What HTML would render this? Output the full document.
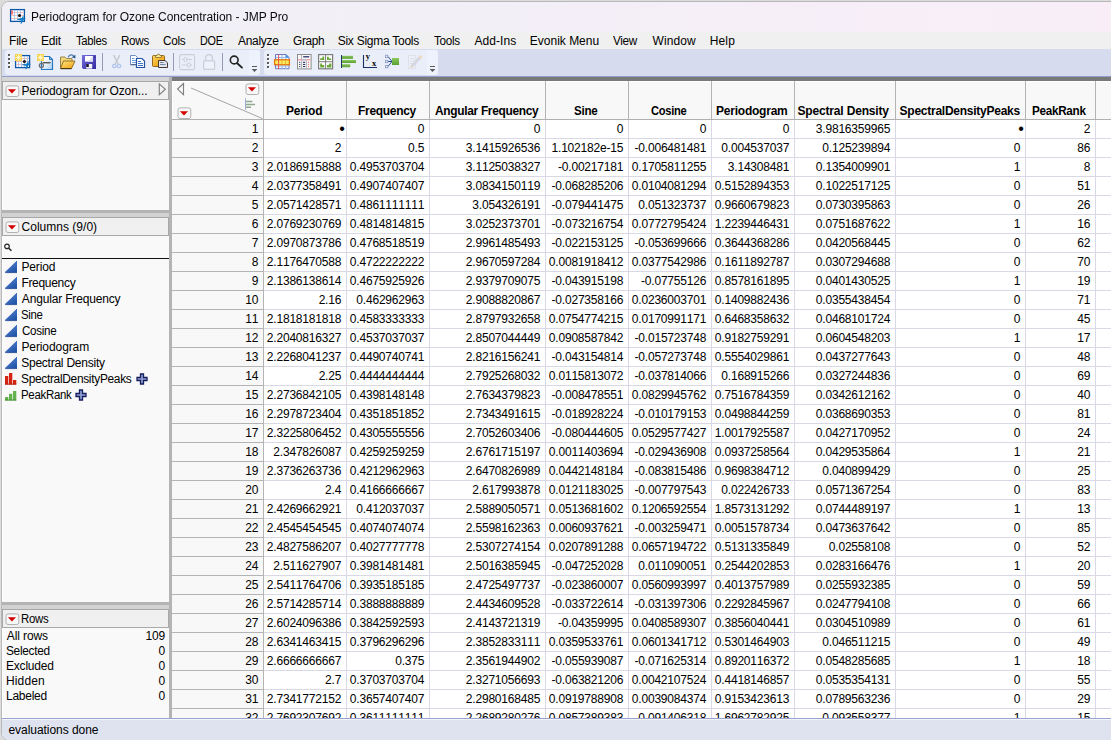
<!DOCTYPE html>
<html><head><meta charset="utf-8"><title>Periodogram for Ozone Concentration - JMP Pro</title>
<style>
*{box-sizing:border-box;margin:0;padding:0}
html,body{width:1111px;height:740px;overflow:hidden;background:#dcdcdc}
body{font-family:"Liberation Sans",sans-serif;font-size:11.5px;color:#000;position:relative}
.a{position:absolute}
.t{position:absolute;white-space:pre;line-height:14px;height:14px;font-size:12px;transform-origin:0 0}
#win{left:1px;top:1px;width:1120px;height:740px;border:1px solid #b8b8b8;border-radius:8px 0 0 8px;background:#f0f0f0;overflow:hidden}
#title{left:2px;top:2px;width:1109px;height:30px;background:linear-gradient(90deg,#f1f0f7 0%,#f3eff7 45%,#f9eef8 100%);border-radius:7px 0 0 0}
#menu{left:2px;top:32px;width:1109px;height:17px;background:#f0f0f0}
#tb{left:2px;top:49px;width:1109px;height:27px;background:#d6dbee}
#tbline{left:2px;top:76px;width:1109px;height:1px;background:#919dca}
.grp{position:absolute;top:50px;height:25px;background:#eaeef9;border-radius:3px}
.ovf{position:absolute;top:0;right:0;width:11px;height:25px;background:#edf2fc;border-radius:0 3px 3px 0}
.sep{position:absolute;top:53px;width:1px;height:19px;background:#9aa0b4}
#left{left:2px;top:77px;width:167px;height:641px;background:#f9f9f9;border-left:1px solid #fff}
.hs{position:absolute;left:2px;width:167px}
.ph{position:absolute;left:2px;width:167px;height:19px;background:#f0f0f0;border:1px solid #a8a8a8}
.rb{position:absolute;width:15px;height:13px}
#vs{left:169px;top:77px;width:3px;height:641px;background:#b4b4b4}
#tbl{left:172px;top:77px;width:939px;height:641px;background:#fff;overflow:hidden}
#band{left:0;top:0;width:939px;height:4px;background:#797979}
#hd{left:0;top:4px;width:939px;height:38px;background:#f8f8f8;border-top:1px solid #fff;border-left:1px solid #fff}
#hdl{left:0;top:42px;width:939px;height:1px;background:#b0b0b0}
#rn{left:0;top:43px;width:91px;height:600px;background:#f8f8f8}
.vl{position:absolute;top:4px;width:1px;height:39px;background:#b4b4b4}
.vd{position:absolute;top:43px;width:1px;height:600px;background:#d8d8e6}
.r{position:absolute;left:0;width:939px;height:19px;border-bottom:1px solid #d8d8e6}
.r i{position:absolute;left:0;bottom:-1px;width:91px;height:1px;background:#b4b4b4}
.c{position:absolute;top:0;height:18px;line-height:18px;text-align:right;white-space:pre;font-size:12px;letter-spacing:-0.2px;font-kerning:none;font-variant-numeric:tabular-nums}
.c u{text-decoration:none;display:inline-block;font-size:16px;line-height:18px;height:18px;vertical-align:top;position:relative;top:0px;letter-spacing:0}
#st{left:2px;top:718px;width:1109px;height:22px;background:#dfe3f0;border-top:1px solid #99a3d0;border-radius:0 0 0 7px;box-shadow:inset 0 1px 0 #f3f5fb}
</style></head><body>

<div class="a" id="win"></div>
<div class="a" id="title"></div>
<svg class="a" style="left:9px;top:8px" width="18" height="18" viewBox="0 0 18 18">
<rect x="1.6" y="1.6" width="13.8" height="11.8" fill="#fff" stroke="#0a56a8" stroke-width="1.3"/>
<path d="M2.3 4.5H14.7M2.3 7.5H14.7M2.3 10.5H14.7" stroke="#f6b4b4" stroke-width="0.9" fill="none"/>
<path d="M5.5 2.3V12.7M8.5 2.3V12.7M11.5 2.3V12.7" stroke="#a8c4e8" stroke-width="0.9" fill="none"/>
<path d="M3 2.6V6.4" stroke="#ff4040" stroke-width="1.3"/>
<circle cx="10.5" cy="7.5" r="1.5" fill="#111"/>
<path d="M14.3 7.2 L14.7 10.2 L17 10.8 L14.4 12 L12.2 16 L11.5 15.7 L12.4 12.4 L8.2 11.8 L8.4 11 L12.8 10 Z" fill="#0f7ec6"/>
</svg>
<div class="t" style="left:30.8px;top:10px;letter-spacing:-0.045px;margin-left:0.6px;color:#0c0c0c;will-change:transform">Periodogram for Ozone Concentration - JMP Pro</div>
<div class="a" id="menu"></div>
<div class="t" style="left:9.1px;top:34px;letter-spacing:-0.267px">File</div>
<div class="t" style="left:40.9px;top:34px;letter-spacing:-0.135px">Edit</div>
<div class="t" style="left:75.97px;top:34px;letter-spacing:-0.3px;transform:scaleX(0.9418)">Tables</div>
<div class="t" style="left:121.03px;top:34px;letter-spacing:-0.3px;transform:scaleX(0.9702)">Rows</div>
<div class="t" style="left:163.44px;top:34px;letter-spacing:-0.3px;transform:scaleX(0.9836)">Cols</div>
<div class="t" style="left:200.2px;top:34px;letter-spacing:-0.3px;transform:scaleX(0.8991)">DOE</div>
<div class="t" style="left:237.67px;top:34px;letter-spacing:-0.3px;transform:scaleX(0.998)">Analyze</div>
<div class="t" style="left:292.54px;top:34px;letter-spacing:-0.3px;transform:scaleX(0.9844)">Graph</div>
<div class="t" style="left:337.7px;top:34px;letter-spacing:-0.26px">Six Sigma Tools</div>
<div class="t" style="left:433.76px;top:34px;letter-spacing:-0.3px;transform:scaleX(0.9739)">Tools</div>
<div class="t" style="left:474.47px;top:34px;letter-spacing:0.067px">Add-Ins</div>
<div class="t" style="left:529.8px;top:34px;letter-spacing:-0.003px">Evonik Menu</div>
<div class="t" style="left:613.46px;top:34px;letter-spacing:-0.3px;transform:scaleX(0.9763)">View</div>
<div class="t" style="left:652.62px;top:34px;letter-spacing:0.08px">Window</div>
<div class="t" style="left:709.8px;top:34px;letter-spacing:0.117px">Help</div>
<div class="a" id="tb"></div><div class="a" id="tbline"></div>
<div class="grp" style="left:5px;width:255px"><div class="ovf"></div></div>
<div class="grp" style="left:264px;width:174px"><div class="ovf"></div></div>
<svg class="a" style="left:0;top:49px" width="450" height="27" viewBox="0 49 450 27">
<defs>
<linearGradient id="gfold" x1="0" y1="0" x2="1" y2="1"><stop offset="0" stop-color="#ffe680"/><stop offset="1" stop-color="#f0a010"/></linearGradient>
<linearGradient id="gflop" x1="0" y1="0" x2="1" y2="1"><stop offset="0" stop-color="#7470e0"/><stop offset="1" stop-color="#3428a0"/></linearGradient>
<linearGradient id="gdoc" x1="0" y1="0" x2="1" y2="1"><stop offset="0.3" stop-color="#ffffff"/><stop offset="1" stop-color="#a8cdf0"/></linearGradient>
<linearGradient id="gclip" x1="0" y1="0" x2="1" y2="1"><stop offset="0" stop-color="#ffd860"/><stop offset="1" stop-color="#e89000"/></linearGradient>
<linearGradient id="ggrn" x1="0" y1="0" x2="0" y2="1"><stop offset="0" stop-color="#8cc860"/><stop offset="1" stop-color="#58a030"/></linearGradient>
</defs>
<!-- grippers -->
<g fill="#fff"><rect x="9" y="55" width="2" height="2"/><rect x="9" y="59" width="2" height="2"/><rect x="9" y="63" width="2" height="2"/><rect x="9" y="67" width="2" height="2"/><rect x="268" y="55" width="2" height="2"/><rect x="268" y="59" width="2" height="2"/><rect x="268" y="63" width="2" height="2"/><rect x="268" y="67" width="2" height="2"/></g>
<g fill="#585858"><rect x="8" y="54" width="2" height="2"/><rect x="8" y="58" width="2" height="2"/><rect x="8" y="62" width="2" height="2"/><rect x="8" y="66" width="2" height="2"/><rect x="267" y="54" width="2" height="2"/><rect x="267" y="58" width="2" height="2"/><rect x="267" y="62" width="2" height="2"/><rect x="267" y="66" width="2" height="2"/></g>
<!-- icon1 new table -->
<rect x="15.6" y="55.6" width="14" height="12" fill="#fff" stroke="#0a56a8" stroke-width="1.3"/>
<path d="M16 58.5H29M16 61.5H29M16 64.5H29" stroke="#f4b0b0" stroke-width="0.9"/>
<path d="M18.5 56V67M21.5 56V67M24.5 56V67M27.5 56V67" stroke="#a8c4e8" stroke-width="0.9"/>
<circle cx="24.4" cy="61.4" r="1.5" fill="#111"/>
<path d="M28.3 60.6 L28.7 63.5 L31.2 64.1 L28.5 65.3 L26.1 69.4 L25.4 69.1 L26.3 65.7 L22 65.2 L22.2 64.4 L26.8 63.4 Z" fill="#0f7ec6"/>
<rect x="15" y="54" width="7" height="7" fill="#f6d24e"/>
<path d="M18.5 54.5V60.5M15.5 57.5H21.5M16.3 55.3L20.7 59.7M20.7 55.3L16.3 59.7" stroke="#fff6c8" stroke-width="0.9"/>
<!-- icon2 new script -->
<path d="M41.5 56.5H49.5L52.5 59.5V69.5H41.5Z" fill="url(#gdoc)" stroke="#2a78c0" stroke-width="1.2"/>
<path d="M49.5 56.5V59.5H52.5" fill="none" stroke="#2a78c0" stroke-width="1"/>
<path d="M42.6 62.7H50.6" stroke="#5a5a5a" stroke-width="1.5"/>
<circle cx="41.4" cy="65.4" r="2" fill="none" stroke="#707070" stroke-width="1.3"/>
<rect x="37" y="54" width="7" height="7" fill="#f6d24e"/>
<path d="M40.5 54.5V60.5M37.5 57.5H43.5M38.3 55.3L42.7 59.7M42.7 55.3L38.3 59.7" stroke="#fff6c8" stroke-width="0.9"/>
<!-- icon3 open folder -->
<path d="M60.5 68.5V57H65L66.5 58.5H72V61" fill="#f2d878" stroke="#9a8450" stroke-width="1"/>
<path d="M60.5 68.5L63.5 61H75L71.5 68.5Z" fill="url(#gfold)" stroke="#8a6a20" stroke-width="0.9"/>
<path d="M60.5 68.7H71.5" stroke="#3a2a08" stroke-width="1"/>
<path d="M68.2 57.2C69.4 54.4 72.6 54.2 73.8 56.6" fill="none" stroke="#4a78a8" stroke-width="1.2"/>
<path d="M71.8 57.2L75.4 58.4L75.4 54.8Z" fill="#2a5a90"/>
<!-- icon4 floppy -->
<path d="M82 55H96V69H83.2L82 67.8Z" fill="url(#gflop)"/>
<rect x="85" y="56" width="8" height="5.6" fill="#fff"/>
<path d="M93 56L93 61.6L88 61.6Z" fill="#d8e0f0"/>
<rect x="86.2" y="64" width="6" height="4.6" fill="#f4f4f8"/>
<rect x="86.2" y="64" width="2.6" height="3" fill="#18182a"/>
<rect x="94" y="56.5" width="1.2" height="1.2" fill="#2a2070"/>
<!-- sep -->
<g fill="#9698b8"><rect x="102" y="53" width="1" height="18"/><rect x="173" y="53" width="1" height="18"/><rect x="222" y="53" width="1" height="18"/></g>
<!-- scissors disabled -->
<path d="M113.6 55L118.2 64M119.8 55L115.2 64" stroke="#c8cad2" stroke-width="1.6" fill="none"/>
<circle cx="114.3" cy="66" r="1.7" fill="#eef2fc" stroke="#b0c4ee" stroke-width="1.3"/>
<circle cx="119" cy="66" r="1.7" fill="#eef2fc" stroke="#b0c4ee" stroke-width="1.3"/>
<!-- copy -->
<path d="M130.5 55.5H135.5L137.5 57.5V64.5H130.5Z" fill="#fff" stroke="#6f8fc0" stroke-width="1"/>
<path d="M132 58.5H134.5M132 60.5H136M132 62.5H136" stroke="#5a94dc" stroke-width="0.9"/>
<path d="M130.5 64.8H137" stroke="#40506a" stroke-width="0.8"/>
<path d="M136.5 58.5H142L144.5 61V67.5H136.5Z" fill="#fff" stroke="#2452a8" stroke-width="1.2"/>
<path d="M138 61.5H141M138 63.5H143M138 65.5H143" stroke="#3a74d0" stroke-width="1"/>
<!-- paste -->
<rect x="152.5" y="55.5" width="12" height="11" rx="1" fill="url(#gclip)" stroke="#8a5a10" stroke-width="0.9"/>
<path d="M155.5 57.5V55.5H157L157.5 54.3H159.5L160 55.5H161.5V57.5Z" fill="#f8e890" stroke="#8a7030" stroke-width="0.8"/>
<path d="M158.5 60.5H165L167.5 62.8V67.5H158.5Z" fill="#dfe4f2" stroke="#4a3a30" stroke-width="1"/>
<path d="M160 62.5H163.5M160 64.5H165.5" stroke="#707890" stroke-width="0.9"/>
<!-- sliders disabled -->
<rect x="179.6" y="54.6" width="15" height="15" rx="1.6" fill="none" stroke="#cbced8" stroke-width="1.1"/>
<path d="M182 59.5H192M182 65H192" stroke="#cbced8" stroke-width="1"/>
<rect x="184.2" y="57.4" width="2.6" height="4.2" rx="1.2" fill="#eef1fa" stroke="#cbced8" stroke-width="1"/>
<rect x="187.6" y="62.9" width="2.6" height="4.2" rx="1.2" fill="#eef1fa" stroke="#cbced8" stroke-width="1"/>
<!-- lock disabled -->
<path d="M205.6 61V58.2A3.4 3.6 0 0 1 212.4 58.2V61" fill="none" stroke="#cbced8" stroke-width="1.2"/>
<rect x="203.6" y="60.8" width="11" height="8.6" rx="0.8" fill="#eff2fb" stroke="#cbced8" stroke-width="1.2"/>
<!-- magnifier -->
<circle cx="234.2" cy="60" r="3.9" fill="none" stroke="#222" stroke-width="1.6"/>
<path d="M237.2 63.2L242 67.6" stroke="#222" stroke-width="1.9" stroke-linecap="round"/>
<!-- overflow -->
<g fill="#5a5a5a"><rect x="252" y="66" width="5" height="1"/><path d="M251.6 69H257.4L254.5 72.1Z"/><rect x="430" y="66" width="5" height="1"/><path d="M429.6 69H435.4L432.5 72.1Z"/></g>
<!-- icon A table with orange row -->
<path d="M275.5 54.5H286L289 57.5V68.7H275.5Z" fill="#f2f6fe" stroke="#6f78c0" stroke-width="1"/>
<path d="M276 57.5H289M276 66H289" stroke="#8cb8ec" stroke-width="0.9"/>
<path d="M282 55V69M285.5 55V69" stroke="#8cb8ec" stroke-width="0.9"/>
<path d="M286 54.5V57.5H289Z" fill="#3a8ae0"/>
<rect x="274.6" y="59.8" width="14.8" height="4.9" fill="#f6ee60" stroke="#e87408" stroke-width="1.3"/>
<path d="M282 60V64.5M285.6 60V64.5" stroke="#f0a830" stroke-width="0.9"/>
<path d="M278.6 54.5V69" stroke="#f05050" stroke-width="1"/>
<!-- icon B -->
<rect x="297.5" y="54.5" width="13.6" height="14.4" fill="#fafafa" stroke="#8c8c8c" stroke-width="1"/>
<rect x="298" y="59" width="12.6" height="1.4" fill="#f0a0a8"/><rect x="302" y="59" width="4.4" height="1.4" fill="#b4bcd4"/>
<path d="M301.6 55V59M301.6 60.6V68.5M306.4 60.6V68.5" stroke="#a8a8a8" stroke-width="0.9"/>
<path d="M303.2 56.8H309.2" stroke="#283070" stroke-width="1.3"/>
<g fill="#283070"><rect x="299.2" y="61.8" width="1.1" height="1.1"/><rect x="299.2" y="63.9" width="1.1" height="1.1"/><rect x="299.2" y="66" width="1.1" height="1.1"/><rect x="303" y="61.8" width="2.2" height="1.1"/><rect x="303" y="63.9" width="2.2" height="1.1"/><rect x="303" y="66" width="2.2" height="1.1"/></g>
<g fill="#f07078"><rect x="308" y="61.8" width="1.1" height="1.1"/><rect x="308" y="63.9" width="1.1" height="1.1"/><rect x="308" y="66" width="1.1" height="1.1"/></g>
<!-- icon C -->
<rect x="318.6" y="54.6" width="14" height="14.2" fill="#fff" stroke="#7c7c7c" stroke-width="1.2"/>
<path d="M325.6 55V69M319 61.7H332.5" stroke="#7c7c7c" stroke-width="1"/>
<g fill="#6aa838"><path d="M320.2 60V58.2H322.4V56.4H324.2V60Z"/><path d="M327 60V56.8H328.8V58.6H331.2V60Z"/><path d="M320.2 67.4V63.6H322V65H324.2V67.4Z"/><path d="M327 67.4V65H329V63.4H331.4V67.4Z"/></g>
<!-- icon D -->
<rect x="341" y="55" width="1" height="13" fill="#1c3068"/>
<rect x="342" y="55.8" width="11" height="3" fill="url(#ggrn)"/><rect x="342" y="60" width="14" height="3" fill="url(#ggrn)"/><rect x="342" y="64.2" width="8.2" height="3" fill="url(#ggrn)"/>
<!-- icon E -->
<path d="M363.5 55V67.5H377" fill="none" stroke="#1c3068" stroke-width="1.1"/>
<text x="365.8" y="59" font-family="'Liberation Serif',serif" font-weight="bold" font-size="8.6" fill="#000">y</text>
<text x="372" y="66" font-family="'Liberation Serif',serif" font-weight="bold" font-size="8.6" fill="#000">x</text>
<!-- icon F -->
<path d="M388 56.5L392 61.5M388 61.5H392M388 66.5L392 61.5" stroke="#2a5090" stroke-width="1" fill="none"/>
<g fill="#e4e8f6" stroke="#8c9cc8" stroke-width="0.8"><rect x="385.4" y="55.2" width="2.4" height="2.4"/><rect x="385.4" y="60.3" width="2.4" height="2.4"/><rect x="385.4" y="65.4" width="2.4" height="2.4"/></g>
<rect x="392" y="58" width="7" height="7" fill="url(#ggrn)"/>
<!-- icon G disabled -->
<rect x="408.6" y="55.6" width="6.6" height="13" fill="#eef1fa" stroke="#dcdfe8" stroke-width="1"/>
<path d="M410 58.5H414M410 61H414M410 63.5H413" stroke="#d8dbe4" stroke-width="0.9"/>
<path d="M411.5 66.5L420.5 57" stroke="#d4d7e0" stroke-width="3"/>
<path d="M419.6 58L421.6 56" stroke="#f2dcc0" stroke-width="3"/>
<path d="M410 68L411 65.6L412.6 67Z" fill="#e8cfa8"/>
</svg>

<div class="a" id="left"></div>
<svg class="a" width="0" height="0" style="left:0;top:0"><defs><linearGradient id="gtri" x1="0" y1="0" x2="0.6" y2="1"><stop offset="0" stop-color="#5a92e6"/><stop offset="1" stop-color="#2456a8"/></linearGradient></defs></svg>
<div class="hs" style="top:77px;height:5px;background:#d5d5d5"></div>
<div class="ph" style="top:81px"></div><svg class="rb" style="left:4.5px;top:84.5px" viewBox="0 0 15 13"><rect x="1" y="0.9" width="12.8" height="10.6" rx="2" fill="#f8f8f8" stroke="#a8a8a8" stroke-width="0.9"/><path d="M2.9 4.3H11L6.95 8.5Z" fill="#d40000"/></svg>
<div class="t" style="left:21.4px;top:84px;letter-spacing:-0.082px">Periodogram for Ozon...</div>
<svg class="a" style="left:157px;top:83px" width="10" height="14" viewBox="0 0 10 14"><path d="M2.3 0.9 L8.3 6.3 L2.3 11.7 Z" fill="#f4f4f4" stroke="#808080" stroke-width="1.15"/></svg>
<div class="hs" style="top:210px;height:3px;background:#b4b4b4"></div><div class="hs" style="top:213px;height:5px;background:#d2d2d2"></div>
<div class="ph" style="top:217px"></div><svg class="rb" style="left:4.5px;top:220.5px" viewBox="0 0 15 13"><rect x="1" y="0.9" width="12.8" height="10.6" rx="2" fill="#f8f8f8" stroke="#a8a8a8" stroke-width="0.9"/><path d="M2.9 4.3H11L6.95 8.5Z" fill="#d40000"/></svg>
<div class="t" style="left:21.54px;top:220px;letter-spacing:0.017px">Columns (9/0)</div>
<svg class="a" style="left:3px;top:242px" width="11" height="11" viewBox="0 0 11 11"><circle cx="4" cy="4.4" r="2.3" fill="none" stroke="#222" stroke-width="1.2"/><path d="M5.8 6.2 L8.4 8.8" stroke="#222" stroke-width="1.5"/></svg>
<div class="a" style="left:2px;top:258px;width:167px;height:1px;background:#111"></div>
<svg class="a" style="left:4px;top:260px" width="14" height="14" viewBox="0 0 14 14"><path d="M1 12.5 L13 12.5 L13 1 Z" fill="url(#gtri)"/><path d="M1 12.5 L13 1" stroke="#2a58a8" stroke-width="0.8"/><path d="M1.5 12.6H13" stroke="#2a4f96" stroke-width="0.9"/></svg>
<div class="t" style="left:21.4px;top:260px;letter-spacing:-0.14px">Period</div>
<svg class="a" style="left:4px;top:276px" width="14" height="14" viewBox="0 0 14 14"><path d="M1 12.5 L13 12.5 L13 1 Z" fill="url(#gtri)"/><path d="M1 12.5 L13 1" stroke="#2a58a8" stroke-width="0.8"/><path d="M1.5 12.6H13" stroke="#2a4f96" stroke-width="0.9"/></svg>
<div class="t" style="left:21.4px;top:276px;letter-spacing:-0.3px">Frequency</div>
<svg class="a" style="left:4px;top:292px" width="14" height="14" viewBox="0 0 14 14"><path d="M1 12.5 L13 12.5 L13 1 Z" fill="url(#gtri)"/><path d="M1 12.5 L13 1" stroke="#2a58a8" stroke-width="0.8"/><path d="M1.5 12.6H13" stroke="#2a4f96" stroke-width="0.9"/></svg>
<div class="t" style="left:21.86px;top:292px;letter-spacing:-0.168px">Angular Frequency</div>
<svg class="a" style="left:4px;top:308px" width="14" height="14" viewBox="0 0 14 14"><path d="M1 12.5 L13 12.5 L13 1 Z" fill="url(#gtri)"/><path d="M1 12.5 L13 1" stroke="#2a58a8" stroke-width="0.8"/><path d="M1.5 12.6H13" stroke="#2a4f96" stroke-width="0.9"/></svg>
<div class="t" style="left:21.45px;top:308px;letter-spacing:-0.3px;transform:scaleX(0.9462)">Sine</div>
<svg class="a" style="left:4px;top:324px" width="14" height="14" viewBox="0 0 14 14"><path d="M1 12.5 L13 12.5 L13 1 Z" fill="url(#gtri)"/><path d="M1 12.5 L13 1" stroke="#2a58a8" stroke-width="0.8"/><path d="M1.5 12.6H13" stroke="#2a4f96" stroke-width="0.9"/></svg>
<div class="t" style="left:21.55px;top:324px;letter-spacing:-0.3px;transform:scaleX(0.9646)">Cosine</div>
<svg class="a" style="left:4px;top:340px" width="14" height="14" viewBox="0 0 14 14"><path d="M1 12.5 L13 12.5 L13 1 Z" fill="url(#gtri)"/><path d="M1 12.5 L13 1" stroke="#2a58a8" stroke-width="0.8"/><path d="M1.5 12.6H13" stroke="#2a4f96" stroke-width="0.9"/></svg>
<div class="t" style="left:21.4px;top:340px;letter-spacing:-0.089px">Periodogram</div>
<svg class="a" style="left:4px;top:356px" width="14" height="14" viewBox="0 0 14 14"><path d="M1 12.5 L13 12.5 L13 1 Z" fill="url(#gtri)"/><path d="M1 12.5 L13 1" stroke="#2a58a8" stroke-width="0.8"/><path d="M1.5 12.6H13" stroke="#2a4f96" stroke-width="0.9"/></svg>
<div class="t" style="left:21.2px;top:356px;letter-spacing:-0.239px">Spectral Density</div>
<svg class="a" style="left:4px;top:372px" width="14" height="14" viewBox="0 0 14 14"><rect x="1" y="4" width="3.3" height="8.5" fill="#d62414"/><rect x="5" y="1" width="3.3" height="11.5" fill="#d62414"/><rect x="9" y="8" width="3.3" height="4.5" fill="#d62414"/><rect x="1" y="11.7" width="11.3" height="0.9" fill="#b01c10"/></svg>
<div class="t" style="left:21.21px;top:372px;letter-spacing:-0.3px;transform:scaleX(0.9918)">SpectralDensityPeaks</div>
<svg class="a" style="left:4px;top:388px" width="14" height="14" viewBox="0 0 14 14"><rect x="1" y="9" width="3.3" height="3.4" fill="#62b24e"/><rect x="5" y="5.8" width="3.3" height="6.6" fill="#62b24e"/><rect x="9" y="3" width="3.3" height="9.4" fill="#62b24e"/><rect x="1" y="11.6" width="11.3" height="0.9" fill="#3c8a2c"/></svg>
<div class="t" style="left:21.45px;top:388px;letter-spacing:-0.3px;transform:scaleX(0.9538)">PeakRank</div>
<svg class="a" style="left:136px;top:373px" width="12" height="12" viewBox="0 0 12 12"><path d="M4.5 1H7.5V4.5H11V7.5H7.5V11H4.5V7.5H1V4.5H4.5Z" fill="#8fa2d4" stroke="#161e5e" stroke-width="1.3"/></svg>
<svg class="a" style="left:75px;top:389px" width="12" height="12" viewBox="0 0 12 12"><path d="M4.5 1H7.5V4.5H11V7.5H7.5V11H4.5V7.5H1V4.5H4.5Z" fill="#8fa2d4" stroke="#161e5e" stroke-width="1.3"/></svg>
<div class="hs" style="top:602px;height:3px;background:#b4b4b4"></div><div class="hs" style="top:605px;height:5px;background:#d2d2d2"></div>
<div class="ph" style="top:609px"></div><svg class="rb" style="left:4.5px;top:612.5px" viewBox="0 0 15 13"><rect x="1" y="0.9" width="12.8" height="10.6" rx="2" fill="#f8f8f8" stroke="#a8a8a8" stroke-width="0.9"/><path d="M2.9 4.3H11L6.95 8.5Z" fill="#d40000"/></svg>
<div class="t" style="left:21.15px;top:612px;letter-spacing:-0.3px;transform:scaleX(0.9486)">Rows</div>
<div class="t" style="left:6.86px;top:629px;letter-spacing:-0.128px">All rows</div>
<div class="t" style="left:100px;width:65px;text-align:right;top:629px;letter-spacing:-0.2px;font-kerning:none">109</div>
<div class="t" style="left:6.01px;top:644px;letter-spacing:-0.3px;transform:scaleX(0.9883)">Selected</div>
<div class="t" style="left:100px;width:65px;text-align:right;top:644px;letter-spacing:-0.2px;font-kerning:none">0</div>
<div class="t" style="left:6.0px;top:659px;letter-spacing:-0.207px">Excluded</div>
<div class="t" style="left:100px;width:65px;text-align:right;top:659px;letter-spacing:-0.2px;font-kerning:none">0</div>
<div class="t" style="left:6.0px;top:674px;letter-spacing:0.13px">Hidden</div>
<div class="t" style="left:100px;width:65px;text-align:right;top:674px;letter-spacing:-0.2px;font-kerning:none">0</div>
<div class="t" style="left:6.0px;top:689px;letter-spacing:-0.267px">Labeled</div>
<div class="t" style="left:100px;width:65px;text-align:right;top:689px;letter-spacing:-0.2px;font-kerning:none">0</div>
<div class="a" id="vs"></div>
<div class="a" id="tbl"><div class="a" id="band"></div><div class="a" id="hd"></div><div class="a" id="rn"></div>
<div class="r" style="top:43px"><i></i><span class="c" style="left:0px;width:91px;padding-right:4.8px">1</span><span class="c" style="left:92px;width:82px;padding-right:1.2px"><u>•</u></span><span class="c" style="left:175px;width:82px;padding-right:4.8px">0</span><span class="c" style="left:258px;width:115px;padding-right:4.8px">0</span><span class="c" style="left:374px;width:82px;padding-right:4.8px">0</span><span class="c" style="left:457px;width:82px;padding-right:4.8px">0</span><span class="c" style="left:540px;width:82px;padding-right:4.8px">0</span><span class="c" style="left:623px;width:100px;padding-right:4.8px">3.9816359965</span><span class="c" style="left:724px;width:129px;padding-right:1.2px"><u>•</u></span><span class="c" style="left:854px;width:69px;padding-right:4.8px">2</span></div>
<div class="r" style="top:62px"><i></i><span class="c" style="left:0px;width:91px;padding-right:4.8px">2</span><span class="c" style="left:92px;width:82px;padding-right:4.8px">2</span><span class="c" style="left:175px;width:82px;padding-right:4.8px">0.5</span><span class="c" style="left:258px;width:115px;padding-right:4.8px">3.1415926536</span><span class="c" style="left:374px;width:82px;padding-right:4.8px">1.102182e-15</span><span class="c" style="left:457px;width:82px;padding-right:4.8px">-0.006481481</span><span class="c" style="left:540px;width:82px;padding-right:4.8px">0.004537037</span><span class="c" style="left:623px;width:100px;padding-right:4.8px">0.125239894</span><span class="c" style="left:724px;width:129px;padding-right:4.8px">0</span><span class="c" style="left:854px;width:69px;padding-right:4.8px">86</span></div>
<div class="r" style="top:81px"><i></i><span class="c" style="left:0px;width:91px;padding-right:4.8px">3</span><span class="c" style="left:92px;width:82px;padding-right:4.8px">2.0186915888</span><span class="c" style="left:175px;width:82px;padding-right:4.8px">0.4953703704</span><span class="c" style="left:258px;width:115px;padding-right:4.8px">3.1125038327</span><span class="c" style="left:374px;width:82px;padding-right:4.8px">-0.00217181</span><span class="c" style="left:457px;width:82px;padding-right:4.8px">0.1705811255</span><span class="c" style="left:540px;width:82px;padding-right:4.8px">3.14308481</span><span class="c" style="left:623px;width:100px;padding-right:4.8px">0.1354009901</span><span class="c" style="left:724px;width:129px;padding-right:4.8px">1</span><span class="c" style="left:854px;width:69px;padding-right:4.8px">8</span></div>
<div class="r" style="top:100px"><i></i><span class="c" style="left:0px;width:91px;padding-right:4.8px">4</span><span class="c" style="left:92px;width:82px;padding-right:4.8px">2.0377358491</span><span class="c" style="left:175px;width:82px;padding-right:4.8px">0.4907407407</span><span class="c" style="left:258px;width:115px;padding-right:4.8px">3.0834150119</span><span class="c" style="left:374px;width:82px;padding-right:4.8px">-0.068285206</span><span class="c" style="left:457px;width:82px;padding-right:4.8px">0.0104081294</span><span class="c" style="left:540px;width:82px;padding-right:4.8px">0.5152894353</span><span class="c" style="left:623px;width:100px;padding-right:4.8px">0.1022517125</span><span class="c" style="left:724px;width:129px;padding-right:4.8px">0</span><span class="c" style="left:854px;width:69px;padding-right:4.8px">51</span></div>
<div class="r" style="top:119px"><i></i><span class="c" style="left:0px;width:91px;padding-right:4.8px">5</span><span class="c" style="left:92px;width:82px;padding-right:4.8px">2.0571428571</span><span class="c" style="left:175px;width:82px;padding-right:4.8px">0.4861111111</span><span class="c" style="left:258px;width:115px;padding-right:4.8px">3.054326191</span><span class="c" style="left:374px;width:82px;padding-right:4.8px">-0.079441475</span><span class="c" style="left:457px;width:82px;padding-right:4.8px">0.051323737</span><span class="c" style="left:540px;width:82px;padding-right:4.8px">0.9660679823</span><span class="c" style="left:623px;width:100px;padding-right:4.8px">0.0730395863</span><span class="c" style="left:724px;width:129px;padding-right:4.8px">0</span><span class="c" style="left:854px;width:69px;padding-right:4.8px">26</span></div>
<div class="r" style="top:138px"><i></i><span class="c" style="left:0px;width:91px;padding-right:4.8px">6</span><span class="c" style="left:92px;width:82px;padding-right:4.8px">2.0769230769</span><span class="c" style="left:175px;width:82px;padding-right:4.8px">0.4814814815</span><span class="c" style="left:258px;width:115px;padding-right:4.8px">3.0252373701</span><span class="c" style="left:374px;width:82px;padding-right:4.8px">-0.073216754</span><span class="c" style="left:457px;width:82px;padding-right:4.8px">0.0772795424</span><span class="c" style="left:540px;width:82px;padding-right:4.8px">1.2239446431</span><span class="c" style="left:623px;width:100px;padding-right:4.8px">0.0751687622</span><span class="c" style="left:724px;width:129px;padding-right:4.8px">1</span><span class="c" style="left:854px;width:69px;padding-right:4.8px">16</span></div>
<div class="r" style="top:157px"><i></i><span class="c" style="left:0px;width:91px;padding-right:4.8px">7</span><span class="c" style="left:92px;width:82px;padding-right:4.8px">2.0970873786</span><span class="c" style="left:175px;width:82px;padding-right:4.8px">0.4768518519</span><span class="c" style="left:258px;width:115px;padding-right:4.8px">2.9961485493</span><span class="c" style="left:374px;width:82px;padding-right:4.8px">-0.022153125</span><span class="c" style="left:457px;width:82px;padding-right:4.8px">-0.053699666</span><span class="c" style="left:540px;width:82px;padding-right:4.8px">0.3644368286</span><span class="c" style="left:623px;width:100px;padding-right:4.8px">0.0420568445</span><span class="c" style="left:724px;width:129px;padding-right:4.8px">0</span><span class="c" style="left:854px;width:69px;padding-right:4.8px">62</span></div>
<div class="r" style="top:176px"><i></i><span class="c" style="left:0px;width:91px;padding-right:4.8px">8</span><span class="c" style="left:92px;width:82px;padding-right:4.8px">2.1176470588</span><span class="c" style="left:175px;width:82px;padding-right:4.8px">0.4722222222</span><span class="c" style="left:258px;width:115px;padding-right:4.8px">2.9670597284</span><span class="c" style="left:374px;width:82px;padding-right:4.8px">0.0081918412</span><span class="c" style="left:457px;width:82px;padding-right:4.8px">0.0377542986</span><span class="c" style="left:540px;width:82px;padding-right:4.8px">0.1611892787</span><span class="c" style="left:623px;width:100px;padding-right:4.8px">0.0307294688</span><span class="c" style="left:724px;width:129px;padding-right:4.8px">0</span><span class="c" style="left:854px;width:69px;padding-right:4.8px">70</span></div>
<div class="r" style="top:195px"><i></i><span class="c" style="left:0px;width:91px;padding-right:4.8px">9</span><span class="c" style="left:92px;width:82px;padding-right:4.8px">2.1386138614</span><span class="c" style="left:175px;width:82px;padding-right:4.8px">0.4675925926</span><span class="c" style="left:258px;width:115px;padding-right:4.8px">2.9379709075</span><span class="c" style="left:374px;width:82px;padding-right:4.8px">-0.043915198</span><span class="c" style="left:457px;width:82px;padding-right:4.8px">-0.07755126</span><span class="c" style="left:540px;width:82px;padding-right:4.8px">0.8578161895</span><span class="c" style="left:623px;width:100px;padding-right:4.8px">0.0401430525</span><span class="c" style="left:724px;width:129px;padding-right:4.8px">1</span><span class="c" style="left:854px;width:69px;padding-right:4.8px">19</span></div>
<div class="r" style="top:214px"><i></i><span class="c" style="left:0px;width:91px;padding-right:4.8px">10</span><span class="c" style="left:92px;width:82px;padding-right:4.8px">2.16</span><span class="c" style="left:175px;width:82px;padding-right:4.8px">0.462962963</span><span class="c" style="left:258px;width:115px;padding-right:4.8px">2.9088820867</span><span class="c" style="left:374px;width:82px;padding-right:4.8px">-0.027358166</span><span class="c" style="left:457px;width:82px;padding-right:4.8px">0.0236003701</span><span class="c" style="left:540px;width:82px;padding-right:4.8px">0.1409882436</span><span class="c" style="left:623px;width:100px;padding-right:4.8px">0.0355438454</span><span class="c" style="left:724px;width:129px;padding-right:4.8px">0</span><span class="c" style="left:854px;width:69px;padding-right:4.8px">71</span></div>
<div class="r" style="top:233px"><i></i><span class="c" style="left:0px;width:91px;padding-right:4.8px">11</span><span class="c" style="left:92px;width:82px;padding-right:4.8px">2.1818181818</span><span class="c" style="left:175px;width:82px;padding-right:4.8px">0.4583333333</span><span class="c" style="left:258px;width:115px;padding-right:4.8px">2.8797932658</span><span class="c" style="left:374px;width:82px;padding-right:4.8px">0.0754774215</span><span class="c" style="left:457px;width:82px;padding-right:4.8px">0.0170991171</span><span class="c" style="left:540px;width:82px;padding-right:4.8px">0.6468358632</span><span class="c" style="left:623px;width:100px;padding-right:4.8px">0.0468101724</span><span class="c" style="left:724px;width:129px;padding-right:4.8px">0</span><span class="c" style="left:854px;width:69px;padding-right:4.8px">45</span></div>
<div class="r" style="top:252px"><i></i><span class="c" style="left:0px;width:91px;padding-right:4.8px">12</span><span class="c" style="left:92px;width:82px;padding-right:4.8px">2.2040816327</span><span class="c" style="left:175px;width:82px;padding-right:4.8px">0.4537037037</span><span class="c" style="left:258px;width:115px;padding-right:4.8px">2.8507044449</span><span class="c" style="left:374px;width:82px;padding-right:4.8px">0.0908587842</span><span class="c" style="left:457px;width:82px;padding-right:4.8px">-0.015723748</span><span class="c" style="left:540px;width:82px;padding-right:4.8px">0.9182759291</span><span class="c" style="left:623px;width:100px;padding-right:4.8px">0.0604548203</span><span class="c" style="left:724px;width:129px;padding-right:4.8px">1</span><span class="c" style="left:854px;width:69px;padding-right:4.8px">17</span></div>
<div class="r" style="top:271px"><i></i><span class="c" style="left:0px;width:91px;padding-right:4.8px">13</span><span class="c" style="left:92px;width:82px;padding-right:4.8px">2.2268041237</span><span class="c" style="left:175px;width:82px;padding-right:4.8px">0.4490740741</span><span class="c" style="left:258px;width:115px;padding-right:4.8px">2.8216156241</span><span class="c" style="left:374px;width:82px;padding-right:4.8px">-0.043154814</span><span class="c" style="left:457px;width:82px;padding-right:4.8px">-0.057273748</span><span class="c" style="left:540px;width:82px;padding-right:4.8px">0.5554029861</span><span class="c" style="left:623px;width:100px;padding-right:4.8px">0.0437277643</span><span class="c" style="left:724px;width:129px;padding-right:4.8px">0</span><span class="c" style="left:854px;width:69px;padding-right:4.8px">48</span></div>
<div class="r" style="top:290px"><i></i><span class="c" style="left:0px;width:91px;padding-right:4.8px">14</span><span class="c" style="left:92px;width:82px;padding-right:4.8px">2.25</span><span class="c" style="left:175px;width:82px;padding-right:4.8px">0.4444444444</span><span class="c" style="left:258px;width:115px;padding-right:4.8px">2.7925268032</span><span class="c" style="left:374px;width:82px;padding-right:4.8px">0.0115813072</span><span class="c" style="left:457px;width:82px;padding-right:4.8px">-0.037814066</span><span class="c" style="left:540px;width:82px;padding-right:4.8px">0.168915266</span><span class="c" style="left:623px;width:100px;padding-right:4.8px">0.0327244836</span><span class="c" style="left:724px;width:129px;padding-right:4.8px">0</span><span class="c" style="left:854px;width:69px;padding-right:4.8px">69</span></div>
<div class="r" style="top:309px"><i></i><span class="c" style="left:0px;width:91px;padding-right:4.8px">15</span><span class="c" style="left:92px;width:82px;padding-right:4.8px">2.2736842105</span><span class="c" style="left:175px;width:82px;padding-right:4.8px">0.4398148148</span><span class="c" style="left:258px;width:115px;padding-right:4.8px">2.7634379823</span><span class="c" style="left:374px;width:82px;padding-right:4.8px">-0.008478551</span><span class="c" style="left:457px;width:82px;padding-right:4.8px">0.0829945762</span><span class="c" style="left:540px;width:82px;padding-right:4.8px">0.7516784359</span><span class="c" style="left:623px;width:100px;padding-right:4.8px">0.0342612162</span><span class="c" style="left:724px;width:129px;padding-right:4.8px">0</span><span class="c" style="left:854px;width:69px;padding-right:4.8px">40</span></div>
<div class="r" style="top:328px"><i></i><span class="c" style="left:0px;width:91px;padding-right:4.8px">16</span><span class="c" style="left:92px;width:82px;padding-right:4.8px">2.2978723404</span><span class="c" style="left:175px;width:82px;padding-right:4.8px">0.4351851852</span><span class="c" style="left:258px;width:115px;padding-right:4.8px">2.7343491615</span><span class="c" style="left:374px;width:82px;padding-right:4.8px">-0.018928224</span><span class="c" style="left:457px;width:82px;padding-right:4.8px">-0.010179153</span><span class="c" style="left:540px;width:82px;padding-right:4.8px">0.0498844259</span><span class="c" style="left:623px;width:100px;padding-right:4.8px">0.0368690353</span><span class="c" style="left:724px;width:129px;padding-right:4.8px">0</span><span class="c" style="left:854px;width:69px;padding-right:4.8px">81</span></div>
<div class="r" style="top:347px"><i></i><span class="c" style="left:0px;width:91px;padding-right:4.8px">17</span><span class="c" style="left:92px;width:82px;padding-right:4.8px">2.3225806452</span><span class="c" style="left:175px;width:82px;padding-right:4.8px">0.4305555556</span><span class="c" style="left:258px;width:115px;padding-right:4.8px">2.7052603406</span><span class="c" style="left:374px;width:82px;padding-right:4.8px">-0.080444605</span><span class="c" style="left:457px;width:82px;padding-right:4.8px">0.0529577427</span><span class="c" style="left:540px;width:82px;padding-right:4.8px">1.0017925587</span><span class="c" style="left:623px;width:100px;padding-right:4.8px">0.0427170952</span><span class="c" style="left:724px;width:129px;padding-right:4.8px">0</span><span class="c" style="left:854px;width:69px;padding-right:4.8px">24</span></div>
<div class="r" style="top:366px"><i></i><span class="c" style="left:0px;width:91px;padding-right:4.8px">18</span><span class="c" style="left:92px;width:82px;padding-right:4.8px">2.347826087</span><span class="c" style="left:175px;width:82px;padding-right:4.8px">0.4259259259</span><span class="c" style="left:258px;width:115px;padding-right:4.8px">2.6761715197</span><span class="c" style="left:374px;width:82px;padding-right:4.8px">0.0011403694</span><span class="c" style="left:457px;width:82px;padding-right:4.8px">-0.029436908</span><span class="c" style="left:540px;width:82px;padding-right:4.8px">0.0937258564</span><span class="c" style="left:623px;width:100px;padding-right:4.8px">0.0429535864</span><span class="c" style="left:724px;width:129px;padding-right:4.8px">1</span><span class="c" style="left:854px;width:69px;padding-right:4.8px">21</span></div>
<div class="r" style="top:385px"><i></i><span class="c" style="left:0px;width:91px;padding-right:4.8px">19</span><span class="c" style="left:92px;width:82px;padding-right:4.8px">2.3736263736</span><span class="c" style="left:175px;width:82px;padding-right:4.8px">0.4212962963</span><span class="c" style="left:258px;width:115px;padding-right:4.8px">2.6470826989</span><span class="c" style="left:374px;width:82px;padding-right:4.8px">0.0442148184</span><span class="c" style="left:457px;width:82px;padding-right:4.8px">-0.083815486</span><span class="c" style="left:540px;width:82px;padding-right:4.8px">0.9698384712</span><span class="c" style="left:623px;width:100px;padding-right:4.8px">0.040899429</span><span class="c" style="left:724px;width:129px;padding-right:4.8px">0</span><span class="c" style="left:854px;width:69px;padding-right:4.8px">25</span></div>
<div class="r" style="top:404px"><i></i><span class="c" style="left:0px;width:91px;padding-right:4.8px">20</span><span class="c" style="left:92px;width:82px;padding-right:4.8px">2.4</span><span class="c" style="left:175px;width:82px;padding-right:4.8px">0.4166666667</span><span class="c" style="left:258px;width:115px;padding-right:4.8px">2.617993878</span><span class="c" style="left:374px;width:82px;padding-right:4.8px">0.0121183025</span><span class="c" style="left:457px;width:82px;padding-right:4.8px">-0.007797543</span><span class="c" style="left:540px;width:82px;padding-right:4.8px">0.022426733</span><span class="c" style="left:623px;width:100px;padding-right:4.8px">0.0571367254</span><span class="c" style="left:724px;width:129px;padding-right:4.8px">0</span><span class="c" style="left:854px;width:69px;padding-right:4.8px">83</span></div>
<div class="r" style="top:423px"><i></i><span class="c" style="left:0px;width:91px;padding-right:4.8px">21</span><span class="c" style="left:92px;width:82px;padding-right:4.8px">2.4269662921</span><span class="c" style="left:175px;width:82px;padding-right:4.8px">0.412037037</span><span class="c" style="left:258px;width:115px;padding-right:4.8px">2.5889050571</span><span class="c" style="left:374px;width:82px;padding-right:4.8px">0.0513681602</span><span class="c" style="left:457px;width:82px;padding-right:4.8px">0.1206592554</span><span class="c" style="left:540px;width:82px;padding-right:4.8px">1.8573131292</span><span class="c" style="left:623px;width:100px;padding-right:4.8px">0.0744489197</span><span class="c" style="left:724px;width:129px;padding-right:4.8px">1</span><span class="c" style="left:854px;width:69px;padding-right:4.8px">13</span></div>
<div class="r" style="top:442px"><i></i><span class="c" style="left:0px;width:91px;padding-right:4.8px">22</span><span class="c" style="left:92px;width:82px;padding-right:4.8px">2.4545454545</span><span class="c" style="left:175px;width:82px;padding-right:4.8px">0.4074074074</span><span class="c" style="left:258px;width:115px;padding-right:4.8px">2.5598162363</span><span class="c" style="left:374px;width:82px;padding-right:4.8px">0.0060937621</span><span class="c" style="left:457px;width:82px;padding-right:4.8px">-0.003259471</span><span class="c" style="left:540px;width:82px;padding-right:4.8px">0.0051578734</span><span class="c" style="left:623px;width:100px;padding-right:4.8px">0.0473637642</span><span class="c" style="left:724px;width:129px;padding-right:4.8px">0</span><span class="c" style="left:854px;width:69px;padding-right:4.8px">85</span></div>
<div class="r" style="top:461px"><i></i><span class="c" style="left:0px;width:91px;padding-right:4.8px">23</span><span class="c" style="left:92px;width:82px;padding-right:4.8px">2.4827586207</span><span class="c" style="left:175px;width:82px;padding-right:4.8px">0.4027777778</span><span class="c" style="left:258px;width:115px;padding-right:4.8px">2.5307274154</span><span class="c" style="left:374px;width:82px;padding-right:4.8px">0.0207891288</span><span class="c" style="left:457px;width:82px;padding-right:4.8px">0.0657194722</span><span class="c" style="left:540px;width:82px;padding-right:4.8px">0.5131335849</span><span class="c" style="left:623px;width:100px;padding-right:4.8px">0.02558108</span><span class="c" style="left:724px;width:129px;padding-right:4.8px">0</span><span class="c" style="left:854px;width:69px;padding-right:4.8px">52</span></div>
<div class="r" style="top:480px"><i></i><span class="c" style="left:0px;width:91px;padding-right:4.8px">24</span><span class="c" style="left:92px;width:82px;padding-right:4.8px">2.511627907</span><span class="c" style="left:175px;width:82px;padding-right:4.8px">0.3981481481</span><span class="c" style="left:258px;width:115px;padding-right:4.8px">2.5016385945</span><span class="c" style="left:374px;width:82px;padding-right:4.8px">-0.047252028</span><span class="c" style="left:457px;width:82px;padding-right:4.8px">0.011090051</span><span class="c" style="left:540px;width:82px;padding-right:4.8px">0.2544202853</span><span class="c" style="left:623px;width:100px;padding-right:4.8px">0.0283166476</span><span class="c" style="left:724px;width:129px;padding-right:4.8px">1</span><span class="c" style="left:854px;width:69px;padding-right:4.8px">20</span></div>
<div class="r" style="top:499px"><i></i><span class="c" style="left:0px;width:91px;padding-right:4.8px">25</span><span class="c" style="left:92px;width:82px;padding-right:4.8px">2.5411764706</span><span class="c" style="left:175px;width:82px;padding-right:4.8px">0.3935185185</span><span class="c" style="left:258px;width:115px;padding-right:4.8px">2.4725497737</span><span class="c" style="left:374px;width:82px;padding-right:4.8px">-0.023860007</span><span class="c" style="left:457px;width:82px;padding-right:4.8px">0.0560993997</span><span class="c" style="left:540px;width:82px;padding-right:4.8px">0.4013757989</span><span class="c" style="left:623px;width:100px;padding-right:4.8px">0.0255932385</span><span class="c" style="left:724px;width:129px;padding-right:4.8px">0</span><span class="c" style="left:854px;width:69px;padding-right:4.8px">59</span></div>
<div class="r" style="top:518px"><i></i><span class="c" style="left:0px;width:91px;padding-right:4.8px">26</span><span class="c" style="left:92px;width:82px;padding-right:4.8px">2.5714285714</span><span class="c" style="left:175px;width:82px;padding-right:4.8px">0.3888888889</span><span class="c" style="left:258px;width:115px;padding-right:4.8px">2.4434609528</span><span class="c" style="left:374px;width:82px;padding-right:4.8px">-0.033722614</span><span class="c" style="left:457px;width:82px;padding-right:4.8px">-0.031397306</span><span class="c" style="left:540px;width:82px;padding-right:4.8px">0.2292845967</span><span class="c" style="left:623px;width:100px;padding-right:4.8px">0.0247794108</span><span class="c" style="left:724px;width:129px;padding-right:4.8px">0</span><span class="c" style="left:854px;width:69px;padding-right:4.8px">66</span></div>
<div class="r" style="top:537px"><i></i><span class="c" style="left:0px;width:91px;padding-right:4.8px">27</span><span class="c" style="left:92px;width:82px;padding-right:4.8px">2.6024096386</span><span class="c" style="left:175px;width:82px;padding-right:4.8px">0.3842592593</span><span class="c" style="left:258px;width:115px;padding-right:4.8px">2.4143721319</span><span class="c" style="left:374px;width:82px;padding-right:4.8px">-0.04359995</span><span class="c" style="left:457px;width:82px;padding-right:4.8px">0.0408589307</span><span class="c" style="left:540px;width:82px;padding-right:4.8px">0.3856040441</span><span class="c" style="left:623px;width:100px;padding-right:4.8px">0.0304510989</span><span class="c" style="left:724px;width:129px;padding-right:4.8px">0</span><span class="c" style="left:854px;width:69px;padding-right:4.8px">61</span></div>
<div class="r" style="top:556px"><i></i><span class="c" style="left:0px;width:91px;padding-right:4.8px">28</span><span class="c" style="left:92px;width:82px;padding-right:4.8px">2.6341463415</span><span class="c" style="left:175px;width:82px;padding-right:4.8px">0.3796296296</span><span class="c" style="left:258px;width:115px;padding-right:4.8px">2.3852833111</span><span class="c" style="left:374px;width:82px;padding-right:4.8px">0.0359533761</span><span class="c" style="left:457px;width:82px;padding-right:4.8px">0.0601341712</span><span class="c" style="left:540px;width:82px;padding-right:4.8px">0.5301464903</span><span class="c" style="left:623px;width:100px;padding-right:4.8px">0.046511215</span><span class="c" style="left:724px;width:129px;padding-right:4.8px">0</span><span class="c" style="left:854px;width:69px;padding-right:4.8px">49</span></div>
<div class="r" style="top:575px"><i></i><span class="c" style="left:0px;width:91px;padding-right:4.8px">29</span><span class="c" style="left:92px;width:82px;padding-right:4.8px">2.6666666667</span><span class="c" style="left:175px;width:82px;padding-right:4.8px">0.375</span><span class="c" style="left:258px;width:115px;padding-right:4.8px">2.3561944902</span><span class="c" style="left:374px;width:82px;padding-right:4.8px">-0.055939087</span><span class="c" style="left:457px;width:82px;padding-right:4.8px">-0.071625314</span><span class="c" style="left:540px;width:82px;padding-right:4.8px">0.8920116372</span><span class="c" style="left:623px;width:100px;padding-right:4.8px">0.0548285685</span><span class="c" style="left:724px;width:129px;padding-right:4.8px">1</span><span class="c" style="left:854px;width:69px;padding-right:4.8px">18</span></div>
<div class="r" style="top:594px"><i></i><span class="c" style="left:0px;width:91px;padding-right:4.8px">30</span><span class="c" style="left:92px;width:82px;padding-right:4.8px">2.7</span><span class="c" style="left:175px;width:82px;padding-right:4.8px">0.3703703704</span><span class="c" style="left:258px;width:115px;padding-right:4.8px">2.3271056693</span><span class="c" style="left:374px;width:82px;padding-right:4.8px">-0.063821206</span><span class="c" style="left:457px;width:82px;padding-right:4.8px">0.0042107524</span><span class="c" style="left:540px;width:82px;padding-right:4.8px">0.4418146857</span><span class="c" style="left:623px;width:100px;padding-right:4.8px">0.0535354131</span><span class="c" style="left:724px;width:129px;padding-right:4.8px">0</span><span class="c" style="left:854px;width:69px;padding-right:4.8px">55</span></div>
<div class="r" style="top:613px"><i></i><span class="c" style="left:0px;width:91px;padding-right:4.8px">31</span><span class="c" style="left:92px;width:82px;padding-right:4.8px">2.7341772152</span><span class="c" style="left:175px;width:82px;padding-right:4.8px">0.3657407407</span><span class="c" style="left:258px;width:115px;padding-right:4.8px">2.2980168485</span><span class="c" style="left:374px;width:82px;padding-right:4.8px">0.0919788908</span><span class="c" style="left:457px;width:82px;padding-right:4.8px">0.0039084374</span><span class="c" style="left:540px;width:82px;padding-right:4.8px">0.9153423613</span><span class="c" style="left:623px;width:100px;padding-right:4.8px">0.0789563236</span><span class="c" style="left:724px;width:129px;padding-right:4.8px">0</span><span class="c" style="left:854px;width:69px;padding-right:4.8px">29</span></div>
<div class="r" style="top:632px"><i></i><span class="c" style="left:0px;width:91px;padding-right:4.8px">32</span><span class="c" style="left:92px;width:82px;padding-right:4.8px">2.7692307692</span><span class="c" style="left:175px;width:82px;padding-right:4.8px">0.3611111111</span><span class="c" style="left:258px;width:115px;padding-right:4.8px">2.2689280276</span><span class="c" style="left:374px;width:82px;padding-right:4.8px">0.0857389383</span><span class="c" style="left:457px;width:82px;padding-right:4.8px">0.091406318</span><span class="c" style="left:540px;width:82px;padding-right:4.8px">1.6962782925</span><span class="c" style="left:623px;width:100px;padding-right:4.8px">0.093558377</span><span class="c" style="left:724px;width:129px;padding-right:4.8px">1</span><span class="c" style="left:854px;width:69px;padding-right:4.8px">15</span></div>
<div class="vd" style="left:91px;background:#b4b4b4"></div>
<div class="vl" style="left:91px"></div>
<div class="vd" style="left:174px"></div>
<div class="vl" style="left:174px"></div>
<div class="vd" style="left:257px"></div>
<div class="vl" style="left:257px"></div>
<div class="vd" style="left:373px"></div>
<div class="vl" style="left:373px"></div>
<div class="vd" style="left:456px"></div>
<div class="vl" style="left:456px"></div>
<div class="vd" style="left:539px"></div>
<div class="vl" style="left:539px"></div>
<div class="vd" style="left:622px"></div>
<div class="vl" style="left:622px"></div>
<div class="vd" style="left:723px"></div>
<div class="vl" style="left:723px"></div>
<div class="vd" style="left:853px"></div>
<div class="vl" style="left:853px"></div>
<div class="vd" style="left:923px"></div>
<div class="vl" style="left:923px"></div>
<div class="a" id="hdl"></div>
<div class="t" style="left:114.0px;top:27px;font-weight:bold;letter-spacing:-0.175px">Period</div>
<div class="t" style="left:185.5px;top:27px;font-weight:bold;letter-spacing:-0.3px;transform:scaleX(0.9986)">Frequency</div>
<div class="t" style="left:262.94px;top:27px;font-weight:bold;letter-spacing:-0.3px;transform:scaleX(0.9918)">Angular Frequency</div>
<div class="t" style="left:401.88px;top:27px;font-weight:bold;letter-spacing:-0.3px;transform:scaleX(0.9676)">Sine</div>
<div class="t" style="left:478.52px;top:27px;font-weight:bold;letter-spacing:-0.3px;transform:scaleX(0.9267)">Cosine</div>
<div class="t" style="left:544.1px;top:27px;font-weight:bold;letter-spacing:-0.237px">Periodogram</div>
<div class="t" style="left:625.46px;top:27px;font-weight:bold;letter-spacing:-0.168px">Spectral Density</div>
<div class="t" style="left:727.56px;top:27px;font-weight:bold;letter-spacing:-0.251px">SpectralDensityPeaks</div>
<div class="t" style="left:860.42px;top:27px;font-weight:bold;letter-spacing:-0.3px;transform:scaleX(0.9765)">PeakRank</div>
<svg class="a" style="left:0;top:4px" width="92" height="39" viewBox="0 0 92 39">
<path d="M19 7 L90.5 37.6" stroke="#a4a4a4" stroke-width="1" fill="none"/>
<path d="M11.5 2.5 L5.6 8.1 L11.5 13.7 Z" fill="#f8f8f8" stroke="#808080" stroke-width="1.15"/>
<path d="M73.5 17.3 V28.8" stroke="#9fb0d8" stroke-width="1"/>
<path d="M74 20.5H80.4M74 23.4H83M74 26.3H79" stroke="#8fa88f" stroke-width="1.5"/>
</svg>
<svg class="rb" style="left:72.5px;top:5.5px" viewBox="0 0 15 13"><rect x="1" y="0.9" width="12.8" height="10.6" rx="2" fill="#f8f8f8" stroke="#a8a8a8" stroke-width="0.9"/><path d="M2.9 4.3H11L6.95 8.5Z" fill="#d40000"/></svg><svg class="rb" style="left:4.5px;top:29.5px" viewBox="0 0 15 13"><rect x="1" y="0.9" width="12.8" height="10.6" rx="2" fill="#f8f8f8" stroke="#a8a8a8" stroke-width="0.9"/><path d="M2.9 4.3H11L6.95 8.5Z" fill="#d40000"/></svg>
</div>
<div class="a" id="st"></div>
<div class="t" style="left:8.44px;top:723px;letter-spacing:-0.044px">evaluations done</div>
</body></html>
